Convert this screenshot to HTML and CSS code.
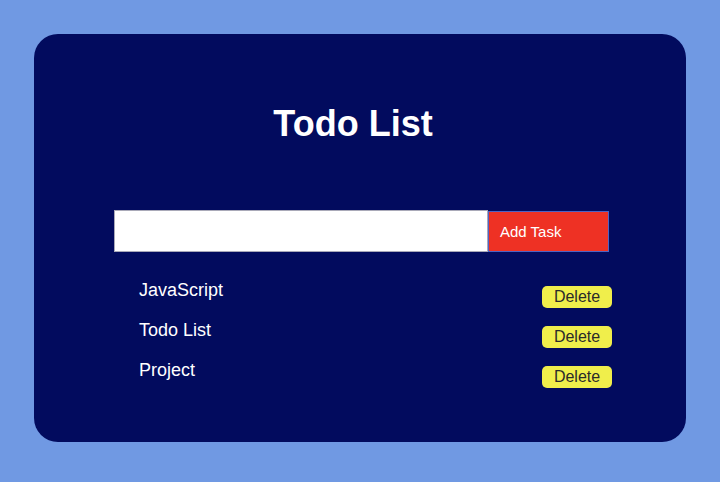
FILE: index.html
```html
<!DOCTYPE html>
<html lang="en">
<head>
<meta charset="utf-8">
<title>Todo List</title>
<link rel="stylesheet" href="styles.css">
</head>
<body>
  <main class="card">
    <h1 class="title">Todo List</h1>
    <form class="add-form">
      <input class="task-input" type="text" aria-label="New task">
      <button class="add-btn" type="button">Add Task</button>
    </form>
    <ul class="tasks">
      <li class="task"><span class="task-name">JavaScript</span><button class="del-btn" type="button">Delete</button></li>
      <li class="task"><span class="task-name">Todo List</span><button class="del-btn" type="button">Delete</button></li>
      <li class="task"><span class="task-name">Project</span><button class="del-btn" type="button">Delete</button></li>
    </ul>
  </main>
</body>
</html>
```
FILE: styles.css
```css
* { box-sizing: border-box; }
html, body { margin: 0; }
body {
  background: #7099e3;
  padding: 34px;
  font-family: "Liberation Sans", Arial, sans-serif;
}
.card {
  width: 652px;
  height: 408px;
  background: #020b5e;
  border-radius: 24px;
  padding: 69px 74px 0 80px;
  display: flex;
  flex-direction: column;
}
.title {
  margin: 0 0 66px;
  text-align: center;
  color: #ffffff;
  font-size: 36px;
  font-weight: bold;
  line-height: 41px;
  padding-right: 20px;
}
.add-form {
  display: flex;
  width: 495px;
  height: 42px;
  margin: 0;
}
.task-input {
  width: 374px;
  height: 42px;
  border: 1px solid #a9a9b8;
  background: #ffffff;
  margin: 0;
  padding: 0 8px;
  font-size: 16px;
}
.add-btn {
  width: 121px;
  height: 41px;
  margin: 1px 0 0;
  background: #ee3124;
  border: 1px solid #4e63c4;
  color: #ffffff;
  font-family: "Liberation Sans", Arial, sans-serif;
  font-size: 15px;
  text-align: left;
  padding: 0 0 0 11px;
}
.tasks {
  list-style: none;
  margin: 28px 0 0;
  padding: 0 0 0 25px;
}
.task {
  display: flex;
  justify-content: space-between;
  align-items: flex-start;
  height: 40px;
}
.task-name {
  color: #ffffff;
  font-size: 18px;
  line-height: 21px;
}
.del-btn {
  margin-top: 6px;
  width: 70px;
  height: 22px;
  padding: 0;
  background: #f0ee4b;
  border: none;
  border-radius: 5px;
  color: #2a2a2a;
  font-family: "Liberation Sans", Arial, sans-serif;
  font-size: 16px;
  line-height: 22px;
}
```
